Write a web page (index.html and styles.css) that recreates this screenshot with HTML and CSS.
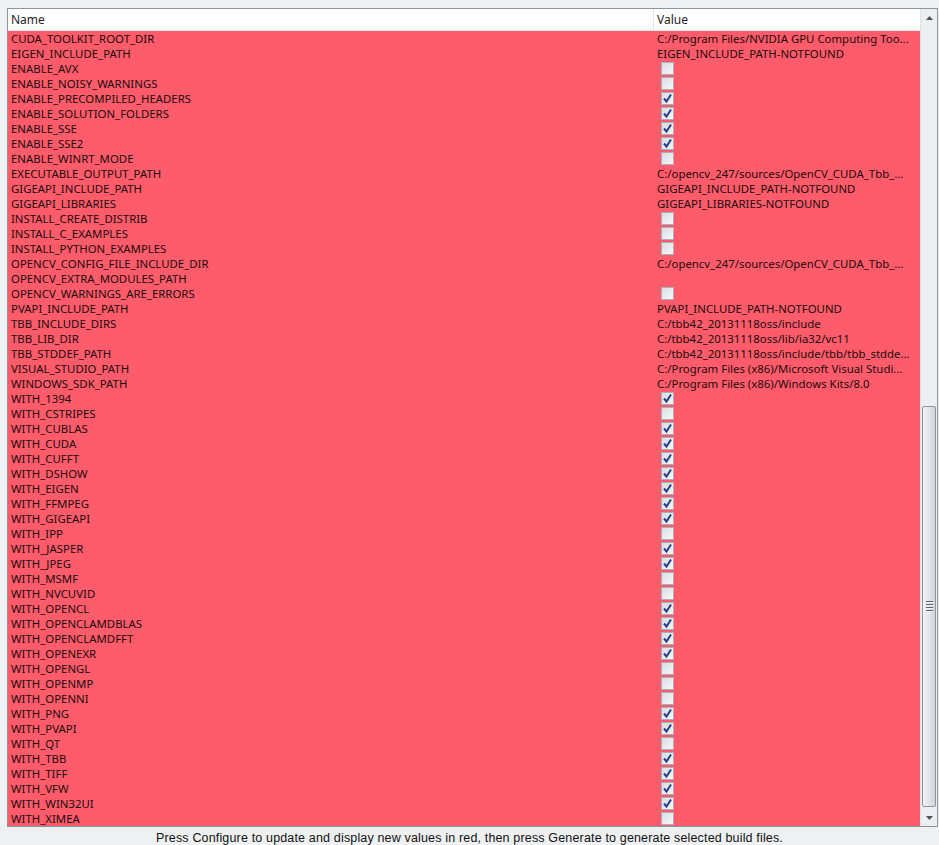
FILE: index.html
```html
<!DOCTYPE html>
<html>
<head>
<meta charset="utf-8">
<link rel="stylesheet" href="styles.css">
</head>
<body>
<div class="tree">
  <div class="main">
    <div class="header">
      <div class="hcell name">Name</div>
      <div class="hcell value">Value</div>
    </div>
    <div class="rows">
      <div class="row"><span class="n">CUDA_TOOLKIT_ROOT_DIR</span><span class="v">C:/Program Files/NVIDIA GPU Computing Too...</span></div>
      <div class="row"><span class="n">EIGEN_INCLUDE_PATH</span><span class="v">EIGEN_INCLUDE_PATH-NOTFOUND</span></div>
      <div class="row"><span class="n">ENABLE_AVX</span><span class="v"><i class="cb"></i></span></div>
      <div class="row"><span class="n">ENABLE_NOISY_WARNINGS</span><span class="v"><i class="cb"></i></span></div>
      <div class="row"><span class="n">ENABLE_PRECOMPILED_HEADERS</span><span class="v"><i class="cb on"></i></span></div>
      <div class="row"><span class="n">ENABLE_SOLUTION_FOLDERS</span><span class="v"><i class="cb on"></i></span></div>
      <div class="row"><span class="n">ENABLE_SSE</span><span class="v"><i class="cb on"></i></span></div>
      <div class="row"><span class="n">ENABLE_SSE2</span><span class="v"><i class="cb on"></i></span></div>
      <div class="row"><span class="n">ENABLE_WINRT_MODE</span><span class="v"><i class="cb"></i></span></div>
      <div class="row"><span class="n">EXECUTABLE_OUTPUT_PATH</span><span class="v">C:/opencv_247/sources/OpenCV_CUDA_Tbb_...</span></div>
      <div class="row"><span class="n">GIGEAPI_INCLUDE_PATH</span><span class="v">GIGEAPI_INCLUDE_PATH-NOTFOUND</span></div>
      <div class="row"><span class="n">GIGEAPI_LIBRARIES</span><span class="v">GIGEAPI_LIBRARIES-NOTFOUND</span></div>
      <div class="row"><span class="n">INSTALL_CREATE_DISTRIB</span><span class="v"><i class="cb"></i></span></div>
      <div class="row"><span class="n">INSTALL_C_EXAMPLES</span><span class="v"><i class="cb"></i></span></div>
      <div class="row"><span class="n">INSTALL_PYTHON_EXAMPLES</span><span class="v"><i class="cb"></i></span></div>
      <div class="row"><span class="n">OPENCV_CONFIG_FILE_INCLUDE_DIR</span><span class="v">C:/opencv_247/sources/OpenCV_CUDA_Tbb_...</span></div>
      <div class="row"><span class="n">OPENCV_EXTRA_MODULES_PATH</span><span class="v"></span></div>
      <div class="row"><span class="n">OPENCV_WARNINGS_ARE_ERRORS</span><span class="v"><i class="cb"></i></span></div>
      <div class="row"><span class="n">PVAPI_INCLUDE_PATH</span><span class="v">PVAPI_INCLUDE_PATH-NOTFOUND</span></div>
      <div class="row"><span class="n">TBB_INCLUDE_DIRS</span><span class="v">C:/tbb42_20131118oss/include</span></div>
      <div class="row"><span class="n">TBB_LIB_DIR</span><span class="v">C:/tbb42_20131118oss/lib/ia32/vc11</span></div>
      <div class="row"><span class="n">TBB_STDDEF_PATH</span><span class="v">C:/tbb42_20131118oss/include/tbb/tbb_stdde...</span></div>
      <div class="row"><span class="n">VISUAL_STUDIO_PATH</span><span class="v">C:/Program Files (x86)/Microsoft Visual Studi...</span></div>
      <div class="row"><span class="n">WINDOWS_SDK_PATH</span><span class="v">C:/Program Files (x86)/Windows Kits/8.0</span></div>
      <div class="row"><span class="n">WITH_1394</span><span class="v"><i class="cb on"></i></span></div>
      <div class="row"><span class="n">WITH_CSTRIPES</span><span class="v"><i class="cb"></i></span></div>
      <div class="row"><span class="n">WITH_CUBLAS</span><span class="v"><i class="cb on"></i></span></div>
      <div class="row"><span class="n">WITH_CUDA</span><span class="v"><i class="cb on"></i></span></div>
      <div class="row"><span class="n">WITH_CUFFT</span><span class="v"><i class="cb on"></i></span></div>
      <div class="row"><span class="n">WITH_DSHOW</span><span class="v"><i class="cb on"></i></span></div>
      <div class="row"><span class="n">WITH_EIGEN</span><span class="v"><i class="cb on"></i></span></div>
      <div class="row"><span class="n">WITH_FFMPEG</span><span class="v"><i class="cb on"></i></span></div>
      <div class="row"><span class="n">WITH_GIGEAPI</span><span class="v"><i class="cb on"></i></span></div>
      <div class="row"><span class="n">WITH_IPP</span><span class="v"><i class="cb"></i></span></div>
      <div class="row"><span class="n">WITH_JASPER</span><span class="v"><i class="cb on"></i></span></div>
      <div class="row"><span class="n">WITH_JPEG</span><span class="v"><i class="cb on"></i></span></div>
      <div class="row"><span class="n">WITH_MSMF</span><span class="v"><i class="cb"></i></span></div>
      <div class="row"><span class="n">WITH_NVCUVID</span><span class="v"><i class="cb"></i></span></div>
      <div class="row"><span class="n">WITH_OPENCL</span><span class="v"><i class="cb on"></i></span></div>
      <div class="row"><span class="n">WITH_OPENCLAMDBLAS</span><span class="v"><i class="cb on"></i></span></div>
      <div class="row"><span class="n">WITH_OPENCLAMDFFT</span><span class="v"><i class="cb on"></i></span></div>
      <div class="row"><span class="n">WITH_OPENEXR</span><span class="v"><i class="cb on"></i></span></div>
      <div class="row"><span class="n">WITH_OPENGL</span><span class="v"><i class="cb"></i></span></div>
      <div class="row"><span class="n">WITH_OPENMP</span><span class="v"><i class="cb"></i></span></div>
      <div class="row"><span class="n">WITH_OPENNI</span><span class="v"><i class="cb"></i></span></div>
      <div class="row"><span class="n">WITH_PNG</span><span class="v"><i class="cb on"></i></span></div>
      <div class="row"><span class="n">WITH_PVAPI</span><span class="v"><i class="cb on"></i></span></div>
      <div class="row"><span class="n">WITH_QT</span><span class="v"><i class="cb"></i></span></div>
      <div class="row"><span class="n">WITH_TBB</span><span class="v"><i class="cb on"></i></span></div>
      <div class="row"><span class="n">WITH_TIFF</span><span class="v"><i class="cb on"></i></span></div>
      <div class="row"><span class="n">WITH_VFW</span><span class="v"><i class="cb on"></i></span></div>
      <div class="row"><span class="n">WITH_WIN32UI</span><span class="v"><i class="cb on"></i></span></div>
      <div class="row"><span class="n">WITH_XIMEA</span><span class="v"><i class="cb"></i></span></div>
    </div>
  </div>
  <div class="vscroll">
    <div class="arrow up"><svg width="7" height="4" viewBox="0 0 7 4"><path d="M0 4 L3.5 0 L7 4 Z" fill="#4d5259"/></svg></div>
    <div class="track">
      <div class="spacer"></div>
      <div class="thumb"><span class="grip"></span><span class="grip"></span><span class="grip"></span><span class="grip"></span></div>
    </div>
    <div class="arrow down"><svg width="7" height="4" viewBox="0 0 7 4"><path d="M0 0 L7 0 L3.5 4 Z" fill="#4d5259"/></svg></div>
  </div>
</div>
<div class="status">Press Configure to update and display new values in red, then press Generate to generate selected build files.</div>
</body>
</html>
```

FILE: styles.css
```css
html, body {
  margin: 0;
  padding: 0;
  background: #eef0f2;
}
body {
  padding: 8px 1px 0 7px;
  font-family: "Noto Sans", "Open Sans", sans-serif;
}
.tree {
  display: grid;
  grid-template-columns: 1fr 17px;
  border: 1px solid #8e949b;
  background: #fff;
  height: 817px;
}
.main {
  display: flex;
  flex-direction: column;
  overflow: hidden;
}
.header {
  display: grid;
  grid-template-columns: 646px 1fr;
  height: 22px;
  border-bottom: 1px solid #e2e4e8;
  background: #fff;
  box-sizing: border-box;
}
.hcell {
  font-size: 12px;
  line-height: 21px;
  color: #1e1e1e;
  padding-left: 3px;
}
.hcell.name {
  border-right: 1px solid #e4e6ea;
}
.hcell.value {
  padding-left: 3px;
}
.rows {
  flex: 1;
  background: #ff5c6b;
}
.row {
  display: grid;
  grid-template-columns: 646px 1fr;
  height: 15px;
  font-size: 11.4px;
  line-height: 15px;
  color: #1a0a0c;
  white-space: nowrap;
}
.n {
  padding-left: 3px;
  overflow: hidden;
}
.v {
  padding-left: 3px;
  overflow: hidden;
  display: flex;
  align-items: center;
}
.cb {
  display: block;
  width: 11px;
  height: 11px;
  margin-left: 4px;
  border: 1px solid #a9b0b9;
  background: linear-gradient(135deg, #d8dce2, #f6f7f9);
  box-sizing: content-box;
}
.cb.on {
  background:
    url("data:image/svg+xml,%3Csvg xmlns='http://www.w3.org/2000/svg' width='11' height='11' viewBox='0 0 11 11'%3E%3Cpath d='M2 5.5 L4.5 8.5 L9 1.5' fill='none' stroke='%2322408f' stroke-width='2'/%3E%3C/svg%3E") center/11px 11px no-repeat,
    linear-gradient(135deg, #d8dce2, #f6f7f9);
}
.vscroll {
  display: flex;
  flex-direction: column;
  background: #eceef1;
  border-left: 1px solid #e0e2e6;
}
.arrow {
  height: 17px;
  display: flex;
  align-items: center;
  justify-content: center;
  flex: none;
}
.track {
  flex: 1;
  display: flex;
  flex-direction: column;
}
.spacer {
  height: 380px;
  flex: none;
}
.thumb {
  flex: 1;
  margin: 0 1px 2px 1px;
  border: 1px solid #8f959c;
  border-radius: 2px;
  background: linear-gradient(90deg, #f1f2f4 0%, #e3e6ea 50%, #cfd4da 100%);
  display: flex;
  flex-direction: column;
  align-items: center;
  justify-content: center;
  gap: 1px;
}
.grip {
  display: block;
  width: 7px;
  height: 1px;
  background: #5c6168;
  border-bottom: 1px solid #f4f5f6;
}
.status {
  text-align: center;
  font-family: "Liberation Sans", Arial, sans-serif;
  font-size: 12.5px;
  line-height: 18px;
  padding-top: 2px;
  color: #111;
  letter-spacing: 0.16px;
  padding-right: 6px;
}
```
